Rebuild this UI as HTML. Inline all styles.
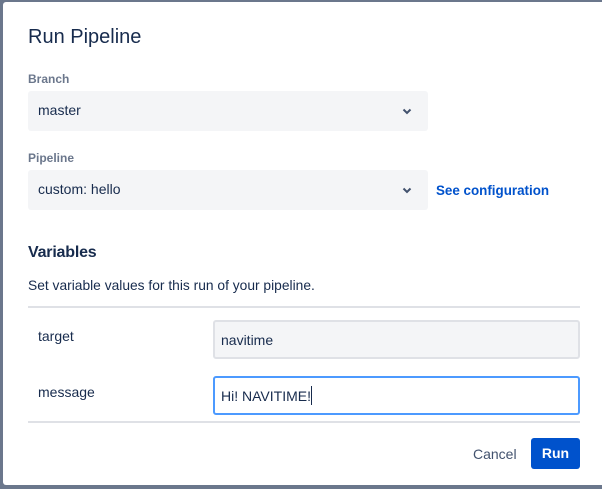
<!DOCTYPE html>
<html><head><meta charset="utf-8"><style>
*{box-sizing:border-box;margin:0;padding:0}
body{width:602px;height:489px;background:#6b778c;position:relative;overflow:hidden;font-family:"Liberation Sans",sans-serif;color:#172b4d}
.dlg{position:absolute;left:3px;top:2px;right:0;height:483px;background:#fff;border-radius:3px 0 0 3px}
.a{position:absolute}
.t{left:25px;top:24px;font-size:20px;color:#172b4d}
.lbl{font-size:12px;color:#6b778c;font-weight:bold}
.sel{left:25px;width:400px;height:40px;background:#f4f5f7;border-radius:3px;font-size:14px;padding:11px 10px}
.chev{position:absolute;right:16px;top:17px;width:10px;height:7px}
.inp{left:210px;width:367px;height:39px;border:2px solid #dfe1e6;border-radius:3px;background:#f4f5f7;font-size:14px;padding:10px 6px}
.rule{left:25px;width:552px;height:2px;background:#dfe1e6}
</style></head><body>
<div class="dlg">
<div class="a t">Run Pipeline</div>
<div class="a lbl" style="left:25px;top:70px">Branch</div>
<div class="a sel" style="top:89px">master<svg class="chev" viewBox="0 0 10 7"><path d="M1.5 1.5 5 5 8.5 1.5" fill="none" stroke="#42526e" stroke-width="2"/></svg></div>
<div class="a lbl" style="left:25px;top:149px">Pipeline</div>
<div class="a sel" style="top:168px">custom: hello<svg class="chev" viewBox="0 0 10 7"><path d="M1.5 1.5 5 5 8.5 1.5" fill="none" stroke="#42526e" stroke-width="2"/></svg></div>
<div class="a" style="left:433px;top:181px;font-size:13.4px;color:#0052cc;font-weight:bold">See configuration</div>
<div class="a" style="left:25px;top:242px;font-size:16px;font-weight:bold;letter-spacing:-0.2px">Variables</div>
<div class="a" style="left:25px;top:276px;font-size:13.8px">Set variable values for this run of your pipeline.</div>
<div class="a rule" style="top:304px"></div>
<div class="a" style="left:35px;top:326px;font-size:14px">target</div>
<div class="a inp" style="top:318px">navitime</div>
<div class="a" style="left:35px;top:382px;font-size:14px">message</div>
<div class="a inp" style="top:374px;background:#fff;border-color:#4c9aff">Hi! NAVITIME!<span style="display:inline-block;width:1px;height:19px;background:#172b4d;vertical-align:middle;margin-top:-3px"></span></div>
<div class="a rule" style="top:419px"></div>
<div class="a" style="left:470px;top:444px;font-size:14px;color:#42526e">Cancel</div>
<div class="a" style="left:528px;top:436px;width:49px;height:31px;background:#0052cc;border-radius:3px;color:#fff;font-size:14px;font-weight:bold;text-align:center;line-height:31px">Run</div>
</div>
</body></html>
